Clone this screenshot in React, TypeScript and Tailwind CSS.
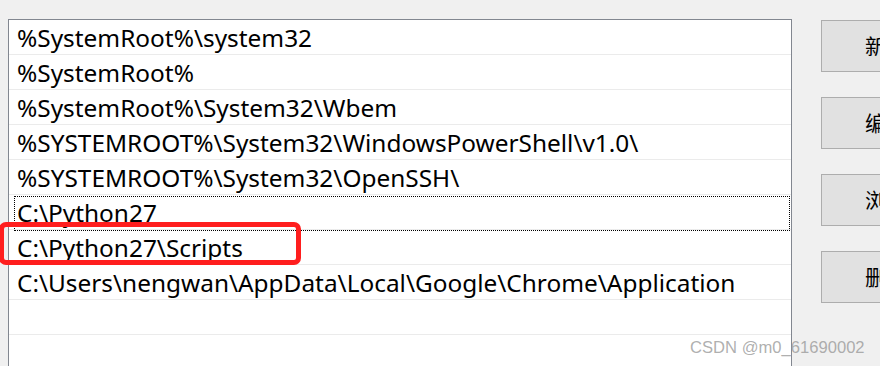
import React from 'react';

const paths = [
  '%SystemRoot%\\system32',
  '%SystemRoot%',
  '%SystemRoot%\\System32\\Wbem',
  '%SYSTEMROOT%\\System32\\WindowsPowerShell\\v1.0\\',
  '%SYSTEMROOT%\\System32\\OpenSSH\\',
  'C:\\Python27',
  'C:\\Python27\\Scripts',
  'C:\\Users\\nengwan\\AppData\\Local\\Google\\Chrome\\Application',
  '',
  '',
];

const buttons = ['新建(N)', '编辑(E)', '浏览(B)...', '删除(D)'];

const SELECTED = 5;

export default function App() {
  return (
    <div className="relative w-[880px] h-[366px] overflow-hidden bg-[#f0f0f0] flex font-['Noto_Sans','Noto_Sans_CJK_SC',sans-serif]">
      {/* path list */}
      <div className="ml-[8px] mt-[19px] w-[784px] h-[400px] shrink-0 border border-[#828790] bg-white">
        {paths.map((p, i) => (
          <div
            key={i}
            className={`h-[35px] border-b border-[#ebebeb] flex items-center ${
              i === SELECTED ? 'relative' : ''
            }`}
          >
            {i === SELECTED && (
              <div className="absolute left-[5px] right-[1px] top-[1px] bottom-[-2px] border border-dotted border-black" />
            )}
            <span className="pl-[8px] pt-[3px] text-[24.4px] leading-none text-black whitespace-nowrap">{p}</span>
          </div>
        ))}
      </div>

      {/* action buttons, cut by the right edge */}
      <div className="ml-[29px] mt-[20px] flex flex-col gap-[25px] shrink-0">
        {buttons.map((b) => (
          <div
            key={b}
            className="w-[130px] h-[52px] border border-[#adadad] bg-[#e1e1e1] flex items-center pl-[43px] text-[21px] text-black whitespace-nowrap font-['Noto_Sans_CJK_SC',sans-serif]"
          >
            {b}
          </div>
        ))}
      </div>

      {/* highlight drawn over the screenshot */}
      <div className="absolute left-[-1px] top-[222px] w-[302px] h-[43px] border-[5px] border-[#ff1e1e] rounded-[7px]" />

      <div className="absolute left-[690px] top-[340px] text-[16.6px] leading-none text-[#9a9a9a]/80 font-['Liberation_Sans',sans-serif] whitespace-nowrap">
        CSDN @m0_61690002
      </div>
    </div>
  );
}
